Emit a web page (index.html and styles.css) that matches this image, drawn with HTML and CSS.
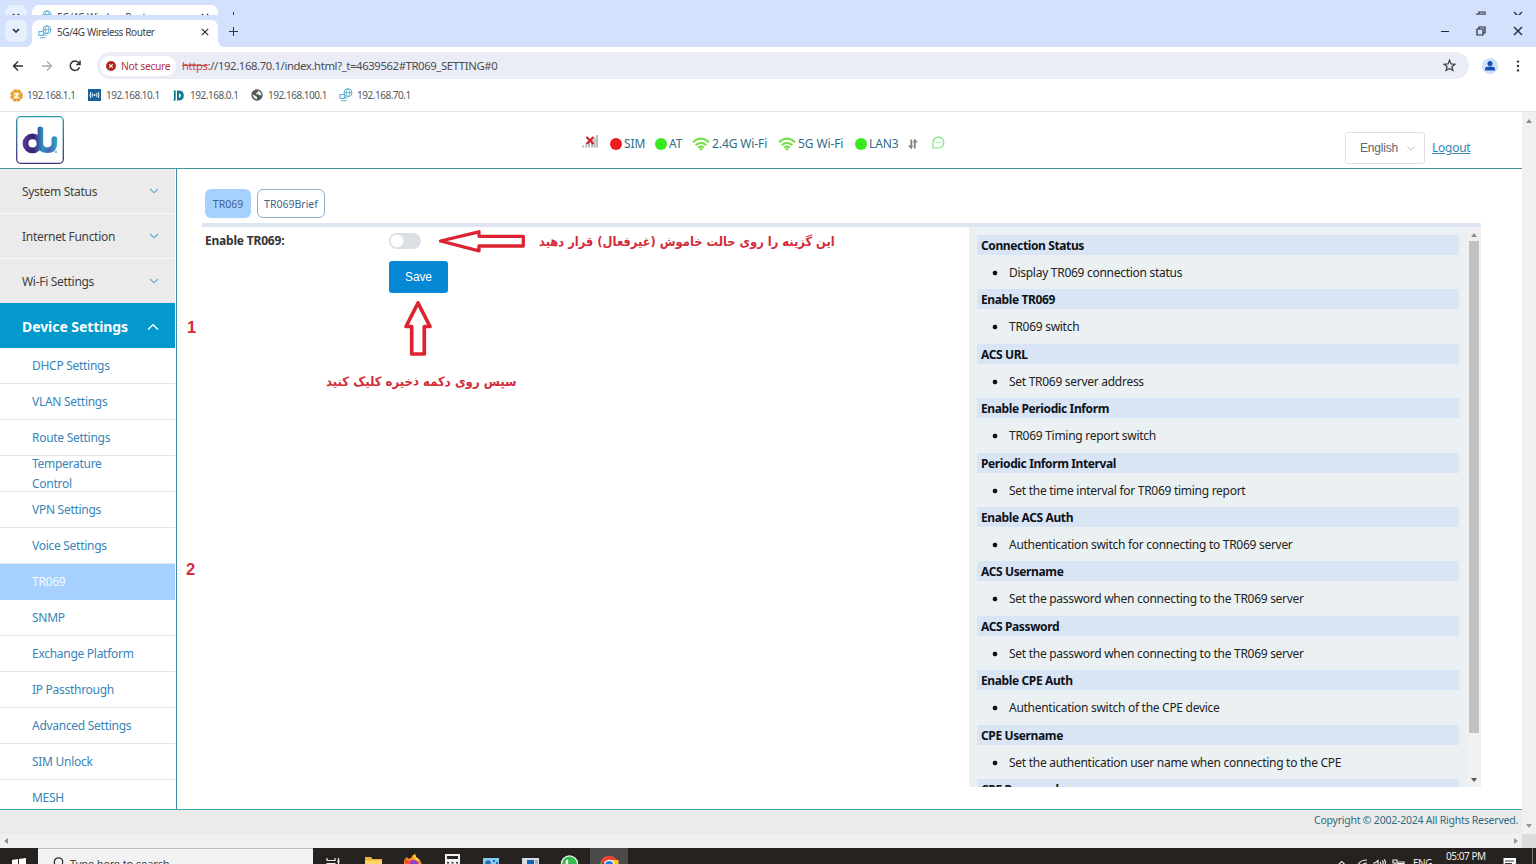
FILE: index.html
```html
<!DOCTYPE html>
<html lang="en">
<head>
<meta charset="utf-8">
<title>5G/4G Wireless Router</title>
<link rel="stylesheet" href="styles.css">
</head>
<body>
<svg class="defs" width="0" height="0">
  <symbol id="router" viewBox="0 0 14 14"><g fill="none" stroke="#63b2d3" stroke-width="1"><circle cx="9" cy="4.700" r="4"/><path d="M5 4.700h8M9 .7c-2.400 2.400-2.400 5.600 0 8M9 .7c2.400 2.400 2.400 5.600 0 8"/><path fill="#e5f5fb" d="M.8 6.500h4.700v4H.8zM2 12.700h5.500M5.500 9l3 1.500"/></g></symbol>
  <symbol id="down" viewBox="0 0 10 6"><path d="M1 1l4 3.700L9 1" fill="none" stroke="currentColor" stroke-width="1.100"/></symbol>
  <symbol id="wifi" viewBox="0 0 18 14"><g fill="none" stroke="#79df4b" stroke-width="2.100"><path d="M1 5.200q8-7 16 0M3.600 8.100q5.400-4.600 10.800 0M6 10.800q3-2.400 6 0"/></g><circle cx="9" cy="12.300" r="1.300" fill="#79df4b"/></symbol>
  <symbol id="cross" viewBox="0 0 10 10"><path d="M1 1l8 8M9 1l-8 8" fill="none" stroke="currentColor" stroke-width="1.400"/></symbol>
  <symbol id="restore" viewBox="0 0 10 10"><path d="M1 3h6v6H1zM3 3V1h6v6H7" fill="none" stroke="currentColor" stroke-width="1.200"/></symbol>
</svg>

<div class="ghost-strip">
  <div class="tab-search ghost-search"><svg width="8" height="6"><path d="M1 1l3 3 3-3" fill="none" stroke="#28304a" stroke-width="1.500"/></svg></div>
  <div class="tab ghost-tab"><svg width="14" height="14"><use href="#router"/></svg><span>5G/4G Wireless Router</span><svg class="tab-x" width="8" height="8"><use href="#cross"/></svg></div>
  <span class="plus"></span>
  <div class="win-buttons"><i class="none"></i><svg width="10" height="10"><use href="#restore"/></svg><svg width="10" height="10"><use href="#cross"/></svg></div>
</div>
<div class="tab-strip">
  <div class="tab-search"><svg width="8" height="6"><path d="M1 1l3 3 3-3" fill="none" stroke="#28304a" stroke-width="1.700"/></svg></div>
  <div class="tab front"><svg width="14" height="14"><use href="#router"/></svg><span>5G/4G Wireless Router</span><svg class="tab-x" width="8" height="8"><use href="#cross"/></svg></div>
  <span class="plus"></span>
  <div class="win-buttons"><i></i><svg width="10" height="10"><use href="#restore"/></svg><svg width="10" height="10"><use href="#cross"/></svg></div>
</div>

<div class="toolbar">
  <svg width="12" height="12" viewBox="0 0 12 12"><path d="M11 6H1.500M6 1.500L1.500 6 6 10.500" fill="none" stroke="#303238" stroke-width="1.500"/></svg>
  <svg width="12" height="12" viewBox="0 0 12 12"><path d="M1 6h9.500M6 1.500L10.500 6 6 10.500" fill="none" stroke="#a9abb0" stroke-width="1.300"/></svg>
  <svg class="reload" width="12" height="12" viewBox="0 0 12 12"><path d="M10.400 7.200A4.700 4.700 0 1 1 9.500 2.700L11 4.300M11 .6v4H7.200" fill="none" stroke="#303238" stroke-width="1.500"/></svg>
  <div class="address">
    <div class="chip"><svg width="10" height="10" viewBox="0 0 10 10"><circle cx="5" cy="5" r="5" fill="#b3261e"/><path d="M3.300 3.300l3.400 3.400M6.700 3.300L3.300 6.700" stroke="#fff" stroke-width="1.200"/></svg><span>Not secure</span></div>
    <span class="url"><s>https</s>://192.168.70.1/index.html?_t=4639562#TR069_SETTING#0</span>
    <svg class="star" width="13" height="13" viewBox="0 0 13 13"><path d="M6.500 1.300l1.500 3.600 3.900.3-3 2.500 1 3.800-3.400-2-3.400 2 1-3.800-3-2.500 3.900-.3z" fill="none" stroke="#42454c" stroke-width="1.300"/></svg>
  </div>
  <svg class="profile" width="16" height="16" viewBox="0 0 16 16"><circle cx="8" cy="8" r="8" fill="#d0e1fc"/><circle cx="8" cy="5.400" r="2.500" fill="#1652b5"/><path d="M3 12.500V11q0-2.400 5-2.400T13 11v1.500z" fill="#1652b5"/></svg>
  <svg class="dots" width="4" height="12"><g fill="#303238"><circle cx="2" cy="1.600" r="1.200"/><circle cx="2" cy="6" r="1.200"/><circle cx="2" cy="10.400" r="1.200"/></g></svg>
</div>
<div class="bookmarks">
  <a class="bm b1"><svg width="13" height="13" viewBox="0 0 13 13"><circle cx="6.500" cy="6.500" r="5" fill="#f3b340" stroke="#e79b28" stroke-width="2.600" stroke-dasharray="3.200 .8"/><path d="M4 4.700h4L4.800 8.500h4" stroke="#fff" stroke-width="1.500" fill="none"/></svg>192.168.1.1</a>
  <a class="bm b2"><svg width="13" height="12" viewBox="0 0 13 12"><path fill="#1a6099" d="M0 0h13v12H0z"/><path d="M3 3Q1 6 3 9M4.500 4.300q-1 1.700 0 3.400M10 3q2 3 0 6M8.500 4.300q1 1.700 0 3.400" fill="none" stroke="#fff"/><circle cx="6.500" cy="6" r="1" fill="#fff"/></svg>192.168.10.1</a>
  <a class="bm b3"><svg width="11" height="11" viewBox="0 0 11 11"><path fill="#0c7d91" d="M.3.500h2.400v10H0L1 9V2zM4 .500h1.500q5.300 0 5.300 5t-5.300 5H4z"/><path d="M6 3v5q1.800-.5 1.800-2.500T6 3z" fill="#fff"/></svg>192.168.0.1</a>
  <a class="bm b4"><svg width="12" height="12" viewBox="0 0 12 12"><circle cx="6" cy="6" r="5.700" fill="#55585c"/><path d="M7 1.700q3.500 1.300 3.500 4l-1.800.8L7.300 5.200H5.500L5 4l1.800-.8zM1.600 5.500l2.700 1.200L6 8v2.300Q2 9.500 1.600 5.500z" fill="#f2f3f4"/></svg>192.168.100.1</a>
  <a class="bm b5"><svg width="14" height="14"><use href="#router"/></svg>192.168.70.1</a>
</div>

<div class="viewport">
  <div class="page">
    <header class="header">
      <svg class="logo" width="48" height="48" viewBox="0 0 48 48"><defs><linearGradient id="lg" x1="6" y1="0" x2="42" y2="0" gradientUnits="userSpaceOnUse"><stop offset="0" stop-color="#5a3aa0"/><stop offset=".3" stop-color="#35236f"/><stop offset=".45" stop-color="#3f559f"/><stop offset=".58" stop-color="#2796bd"/><stop offset=".75" stop-color="#4a62b0"/><stop offset="1" stop-color="#27b3c5"/></linearGradient><linearGradient id="lb" x1="0" y1="0" x2="0" y2="1"><stop offset="0" stop-color="#299ba5"/><stop offset="1" stop-color="#432d7c"/></linearGradient></defs><rect x=".7" y=".7" width="46.600" height="46.600" rx="4" fill="#fff" stroke="url(#lb)" stroke-width="1.300"/><circle cx="16.500" cy="27.400" r="7" fill="none" stroke="url(#lg)" stroke-width="5.800"/><path d="M24.400 13.300V27q0 7.200 7 7.200T38.400 27v-4" fill="none" stroke="url(#lg)" stroke-width="5.600" stroke-linecap="round"/><circle cx="39.900" cy="36" r="1.100" fill="#5db7b3"/></svg>
      <div class="status">
        <svg class="sig" width="16" height="13" viewBox="0 0 16 13"><path d="M1 10.500v2M4 9.500v3M7 7.500v5M10 5v7.500M12.500 3v9.500M15 0v12.500" stroke="#b9b9b9" stroke-width="2"/><path d="M4.500 2l7 7M11.500 2l-7 7" stroke="#d3212b" stroke-width="2.200"/></svg>
        <span class="st sim"><i class="dot red"></i>SIM</span>
        <span class="st at"><i class="dot"></i>AT</span>
        <span class="st w24"><svg width="18" height="14"><use href="#wifi"/></svg>2.4G Wi-Fi</span>
        <span class="st w5"><svg width="18" height="14"><use href="#wifi"/></svg>5G Wi-Fi</span>
        <span class="st lan"><i class="dot"></i>LAN3</span>
        <svg class="updown" width="10" height="12" viewBox="0 0 10 12"><path d="M3.300 1.500v7.700M6.700 10.500V3" stroke="#858585" stroke-width="1.900" fill="none"/><path d="M0 7.500h5l-1.700 4zM5 4.500h5L6.700.5z" fill="#858585"/></svg>
        <svg class="chat" width="13" height="13" viewBox="0 0 13 13"><path d="M1 12V6.200A5.400 5.400 0 1 1 6.500 12z" fill="none" stroke="#7ae27c" stroke-width="1.200"/><path d="M3.700 6.500h1.200M5.900 6.500h1.200M8.100 6.500h1.200" stroke="#7ae27c" stroke-width="1.200"/></svg>
      </div>
      <div class="select"><span>English</span><svg width="8" height="5" viewBox="0 0 10 6"><path d="M.5.500L5 5 9.500.5" fill="none" stroke="#b4b8c0" stroke-width="1.200"/></svg></div>
      <a class="logout">Logout</a>
    </header>
    <div class="main">
      <nav class="sidebar">
        <div class="group"><span>System Status</span><svg width="10" height="6"><use href="#down"/></svg></div>
        <div class="group"><span>Internet Function</span><svg width="10" height="6"><use href="#down"/></svg></div>
        <div class="group"><span>Wi-Fi Settings</span><svg width="10" height="6"><use href="#down"/></svg></div>
        <div class="group open"><span>Device Settings</span><svg width="12" height="8" viewBox="0 0 12 8"><path d="M1 6.500L6 1.700l5 4.800" fill="none" stroke="#fff" stroke-width="1.400"/></svg></div>
        <a class="item">DHCP Settings</a>
        <a class="item">VLAN Settings</a>
        <a class="item">Route Settings</a>
        <a class="item">Temperature<br>Control</a>
        <a class="item">VPN Settings</a>
        <a class="item">Voice Settings</a>
        <a class="item active">TR069</a>
        <a class="item">SNMP</a>
        <a class="item">Exchange Platform</a>
        <a class="item">IP Passthrough</a>
        <a class="item">Advanced Settings</a>
        <a class="item">SIM Unlock</a>
        <a class="item">MESH</a>
      </nav>
      <section class="content">
        <div class="tabs"><a class="pill on">TR069</a><a class="pill brief">TR069Brief</a></div>
        <div class="panel">
          <div class="form">
            <div class="row"><label>Enable TR069:</label><i class="switch"></i></div>
            <div class="save">Save</div>
          </div>
          <aside class="help">
            <div class="topics">
              <h4>Connection Status</h4><p>Display TR069 connection status</p>
              <h4>Enable TR069</h4><p>TR069 switch</p>
              <h4>ACS URL</h4><p>Set TR069 server address</p>
              <h4>Enable Periodic Inform</h4><p>TR069 Timing report switch</p>
              <h4>Periodic Inform Interval</h4><p>Set the time interval for TR069 timing report</p>
              <h4>Enable ACS Auth</h4><p>Authentication switch for connecting to TR069 server</p>
              <h4>ACS Username</h4><p>Set the password when connecting to the TR069 server</p>
              <h4>ACS Password</h4><p>Set the password when connecting to the TR069 server</p>
              <h4>Enable CPE Auth</h4><p>Authentication switch of the CPE device</p>
              <h4>CPE Username</h4><p>Set the authentication user name when connecting to the CPE</p>
              <h4>CPE Password</h4>
            </div>
            <div class="scroll"><i class="tri up"></i><div class="thumb"></div><i class="tri dn"></i></div>
          </aside>
        </div>
      </section>
    </div>
    <footer class="footer">Copyright © 2002-2024 All Rights Reserved.</footer>
  </div>
  <div class="vscroll"><i class="tri up"></i><i class="tri dn"></i></div>
</div>
<div class="hscroll"><i class="tri lf"></i><i class="tri rt"></i><i class="corner"></i></div>

<div class="taskbar">
  <svg class="start" width="14" height="14" viewBox="0 0 14 14"><path d="M0 2l6-.9v5.600H0zM7 1l7-1v6.700H7zM0 7.500h6v5.600L0 12.300zM7 7.500h7V14l-7-1z" fill="#fff"/></svg>
  <div class="search"><svg width="12" height="14" viewBox="0 0 12 14"><circle cx="6.500" cy="5" r="4.200" fill="none" stroke="#333" stroke-width="1.300"/><path d="M4 8.500L.8 12.500" stroke="#333" stroke-width="1.300"/></svg><span>Type here to search</span></div>
  <svg class="apps" width="337" height="17" viewBox="313 847 337 17">
    <path d="M590 847h38v17h-38z" fill="#4b4a49"/>
    <path d="M327 857v2.500h8V857M327 864v-1.500h8v1.500M338.500 857v7" stroke="#eee" stroke-width="1.200" fill="none"/><path d="M337.500 859.500h2v2h-2z" fill="#fff"/>
    <path d="M365 856h6l1.500 2H382v6h-17z" fill="#e9b23c"/><path d="M365 859.500h17v5h-17z" fill="#ffd567"/>
    <path d="M404 864q-.5-6 3-8l1 2 3-1q1-3 4-4l1 3q5 3 6 8z" fill="#ff9029"/><path d="M413 855l2-2 1 3 4 3-3 1z" fill="#ffd335"/><path d="M407 864q1-5 6-5t6 5z" fill="#8b41cf"/><path d="M405 858l4 2 2-1-1 5h-5z" fill="#f9453c"/>
    <path d="M445 853h15v11h-15z" fill="#f2f2f2"/><path d="M447 855h11v3h-11z" fill="#252525"/><path d="M447 861h2v1.500h-2zM451.500 861h2v1.500h-2zM456 861h2v1.500h-2z" fill="#333"/>
    <path d="M483 857h16v7h-16z" fill="#83cdf0"/><circle cx="488" cy="862" r="2.700" fill="#286bbb"/><path d="M493 859h2v2h-2zM496 861h2v3h-2z" fill="#246caf"/>
    <path d="M522 857h17v7h-17z" fill="#d6dce3"/><path d="M527 859h7v5h-7z" fill="#1163b7"/><path d="M535 860h3M535 862h3" stroke="#888"/>
    <circle cx="569.500" cy="863" r="8.700" fill="#eff8ef"/><circle cx="569.500" cy="863" r="7.500" fill="#34bd4d"/><path d="M566 859l1.500-.5 1 2.300-1 1.200 3 3-5-1z" fill="#fff"/>
    <path d="M600 862a9.500 9.500 0 0 1 18.500 0z" fill="#e94435"/><path d="M600 861l5 3h-5z" fill="#29a34b"/><path d="M610 859h8.500v5H610z" fill="#fac52d"/><circle cx="609.200" cy="864" r="5.200" fill="#fff"/><circle cx="609.200" cy="864" r="4" fill="#2e75e6"/>
  </svg>
  <svg class="tray" width="68" height="17" viewBox="1337 847 68 17"><g fill="none" stroke="#e8e8e8" stroke-width="1.200"><path d="M1338 864l3.700-3.500 3.700 3.500M1358 864q2-5 9-5M1361 865q2-3 6-3M1373 862h2l3-2.500v5M1380 861q1.500 1.500 0 3M1382 859.500q2.500 2 0 5M1384 858.500q3 3 0 6M1398 861h7v4M1393 859h4v3h-4zM1395 862v3"/></g><path d="M1397 862h7v2h-7z" fill="#eee"/></svg>
  <span class="lang">ENG</span><span class="clock">05:07 PM</span>
  <svg class="notes" width="33" height="17" viewBox="1503 847 33 17"><path d="M1503.500 857H1516v7h-12.500z" fill="#fff"/><path d="M1505 860h9M1505 862.500h7" stroke="#333"/><path d="M1514 864a3.500 3.500 0 0 1 6 0z" fill="#4b4a48"/><path d="M1532.500 847v17" stroke="#77736e"/></svg>
</div>

<svg class="arrow left" width="90" height="26" viewBox="0 0 90 26"><path d="M4.500 13L43 3.800V8.300H87.300V18H43V22.800z" fill="#fff" stroke="#dc2430" stroke-width="3.300" stroke-linejoin="round"/></svg>
<svg class="arrow upw" width="32" height="60" viewBox="0 0 32 60"><path d="M16 4L28 27.500h-5.700V55H9.700V27.500H4z" fill="#fff" stroke="#dc2430" stroke-width="3.700" stroke-linejoin="round"/></svg>
<div class="note n1" lang="fa" dir="rtl">این گزینه را روی حالت خاموش (غیرفعال) قرار دهید</div>
<div class="note n2" lang="fa" dir="rtl">سپس روی دکمه ذخیره کلیک کنید</div>
<div class="mark m1">1</div>
<div class="mark m2">2</div>
</body>
</html>
```
FILE: styles.css
```css
* { box-sizing: border-box; }
html, body { margin: 0; height: 864px; overflow: hidden; }
body { width: 1536px; position: relative; display: flex; flex-direction: column; background: #fff; font-family: "Noto Sans", sans-serif; font-size: 12px; color: #333; white-space: nowrap; }
svg { display: block; flex: none; }
.defs { display: none; }

/* browser chrome */
.ghost-strip { height: 15px; padding: 5px 0 0 5px; background: #d3e1fc; display: flex; overflow: hidden; flex: none; color: #303440; }
.tab-strip { height: 32px; padding: 5px 0 0 5px; background: #d3e1fc; display: flex; flex: none; color: #252a35; }
.tab-search { width: 22px; height: 22px; border-radius: 7px; background: #e9f0fd; display: flex; align-items: center; justify-content: center; margin-right: 5px; flex: none; }
.tab { width: 186px; height: 27px; border-radius: 7px 7px 0 0; background: #fff; padding: 0 9px 4px 6px; display: flex; align-items: center; font-size: 10px; flex: none; color: #444; }
.tab span { margin-left: 5px; letter-spacing: -.4px; flex: 1; }
.front { position: relative; }
.front::before, .front::after { content: ""; position: absolute; bottom: 0; width: 6px; height: 6px; }
.front::before { left: -6px; background: radial-gradient(circle at 0 0, transparent 5.600px, #fff 6px); }
.front::after { right: -6px; background: radial-gradient(circle at 100% 0, transparent 5.600px, #fff 6px); }
.ghost-tab { border-radius: 7px; height: 27px; }
.tab-x { color: #25272c; }
.plus { width: 9px; height: 9px; margin: 7px 0 0 11px; flex: none; background: linear-gradient(#30343d,#30343d) center/9px 1px no-repeat, linear-gradient(#30343d,#30343d) center/1px 9px no-repeat; }
.win-buttons { margin-left: auto; display: flex; gap: 27px; padding: 6px 13px 0 0; }
.win-buttons i { width: 8px; height: 1px; background: #252a35; margin: 5px 0 0; }
.win-buttons i.none { background: none; }
.toolbar { height: 37px; background: #fff; display: flex; align-items: center; padding: 0 15px 0 12px; gap: 17px; flex: none; border-radius: 6px 6px 0 0; }
body > .toolbar { background: linear-gradient(#fff, #fff); }
.reload { margin-left: -1px; }
.address { width: 1372px; height: 27px; margin-left: -1px; border-radius: 14px; background: #ebedf6; display: flex; align-items: center; padding: 0 13px 0 3px; }
.chip { width: 76px; height: 20px; border-radius: 10px; background: #fff; display: flex; align-items: center; padding-left: 6px; gap: 5px; color: #b3323b; font-size: 10.300px; letter-spacing: -.3px; }
.url { margin-left: 6px; font-size: 11.300px; letter-spacing: -.38px; color: #4a4c52; }
.url s { color: #c44a4a; }
.star { margin-left: auto; }
.profile { margin-left: -4px; }
.dots { margin-left: 1px; }
.bookmarks { height: 28px; display: flex; align-items: center; padding: 0 0 5px 10px; border-bottom: 1px solid #e2e2e2; flex: none; font-size: 10px; letter-spacing: -.48px; color: #55585d; }
.bm { display: flex; align-items: center; gap: 5px; width: 78px; }
.b1 { gap: 4px; } .b2 { width: 85px; } .b3 { width: 78px; gap: 6px; } .b4 { width: 88px; } .b5 { gap: 4px; }

/* page frame */
.viewport { height: 722px; display: flex; flex: none; }
.page { width: 1522px; display: flex; flex-direction: column; }
.header { height: 57px; border-bottom: 1px solid #3f969f; display: flex; padding-left: 16px; flex: none; }
.logo { margin-top: 4px; }
.status { margin: 22px 0 0 518px; width: 364px; height: 19px; display: flex; align-items: center; font-size: 12px; letter-spacing: -.1px; color: #306d85; }
.st { display: flex; align-items: center; }
.sig { margin: -4px 12px 0 0; }
.dot { width: 12px; height: 12px; border-radius: 50%; background: #37e91d; margin-right: 2px; flex: none; }
.dot.red { background: #ee1b22; }
.sim { width: 45px; } .at { width: 37px; } .w24 { width: 86px; } .w5 { width: 77px; } .lan { width: 53px; }
.w24 svg, .w5 svg { margin-right: 2px; }
.chat { margin: -2px 0 0 14px; }
.select { margin: 20px 0 0 399px; width: 80px; height: 32px; border: 1px solid #dddfe3; border-radius: 3px; display: flex; align-items: center; justify-content: space-between; padding: 0 9px 0 14px; font: 12px "Liberation Sans", sans-serif; color: #62666c; letter-spacing: -.2px; }
.logout { margin: 27px 0 0 7px; color: #3586b8; text-decoration: underline; line-height: 17px; font-size: 12px; letter-spacing: -.25px; }
.main { height: 641px; display: flex; border-bottom: 1px solid #3aa9b3; }
.sidebar { width: 177px; border-right: 1px solid #3f8ba5; overflow: hidden; flex: none; padding-right: 1px; }
.group { height: 45px; background: #ebebeb; border-bottom: 1px solid #fafafa; display: flex; align-items: center; justify-content: space-between; padding: 0 16px 0 22px; font-size: 12px; letter-spacing: -.3px; color: #414141; }
.group svg { color: #67abd2; }
.group.open { margin-top: -1px; padding-top: 2px; background: #0399cc; color: #fff; font-weight: 700; font-size: 14px; letter-spacing: -.07px; border: 0; }
.item { height: 36px; border-bottom: 1px solid #dce6f0; padding-left: 32px; display: flex; align-items: center; line-height: 20px; font-size: 12px; letter-spacing: -.28px; color: #3884b7; }
.item.active { background: #a6d1ff; color: #f4f9ff; border-color: #a6d1ff; }
.content { padding: 20px 0 0 28px; display: flex; flex-direction: column; }
.tabs { height: 34px; display: flex; gap: 6px; }
.pill { width: 46px; height: 29px; border-radius: 6px; display: flex; align-items: center; justify-content: center; font-size: 10.500px; color: #41658d; }
.pill.on { background: #a6d0fd; }
.brief { width: 68px; border: 1px solid #93aecb; }
.panel { width: 1279px; margin-left: -3px; border-top: 4px solid #dde5f2; display: flex; }
.form { width: 767px; padding: 5px 0 0 3px; }
.row { display: flex; height: 17px; align-items: center; }
.row label { width: 184px; font-size: 12px; font-weight: 700; letter-spacing: -.2px; color: #333; }
.switch { width: 32px; height: 16px; border-radius: 8px; background: radial-gradient(circle at 8px 8px, #fff 6px, transparent 6.700px), #dcdfe6; }
.save { margin: 12px 0 0 184px; width: 59px; height: 32px; border-radius: 3px; background: #0688d4; color: #fff; display: flex; align-items: center; justify-content: center; font: 12px "Liberation Sans", sans-serif; letter-spacing: -.15px; }
.help { width: 512px; height: 560px; background: #ebf1f3; display: flex; overflow: hidden; color: #222; }
.topics { width: 499px; padding: 8px 9px 0 8px; }
.topics h4 { margin: 0; height: 20px; line-height: 21px; padding-left: 4px; background: #d9e4f4; font-size: 12px; letter-spacing: -.38px; color: #0c1219; }
.topics p { margin: 0; height: 34.400px; line-height: 36px; padding-left: 32px; font-size: 12px; letter-spacing: -.28px; background: radial-gradient(circle at 18px 18px, #111 2px, transparent 2.700px); }
.scroll { width: 13px; background: #f1f1f1; display: flex; flex-direction: column; align-items: center; padding: 6px 2px 5px 1px; }
.thumb { width: 10px; height: 492px; margin-top: 4px; background: #c1c1c1; }
.tri { width: 0; height: 0; border: 3px solid transparent; flex: none; }
.tri.up { border-bottom: 4px solid #8c8c8c; border-top: 0; }
.tri.dn { border-top: 4px solid #555; border-bottom: 0; margin-top: auto; }
.footer { height: 24px; background: #ebebeb; text-align: right; padding-right: 4px; line-height: 21px; font-size: 10.500px; letter-spacing: -.23px; color: #2d6c81; }
.vscroll { width: 14px; background: #f0f0f0; display: flex; flex-direction: column; align-items: center; padding: 7px 0 6px; }
.vscroll .dn { border-top-color: #999; }
.hscroll { height: 14px; background: #f0f0f0; display: flex; align-items: center; padding-left: 4px; flex: none; }
.tri.lf { border-right: 4px solid #8e8e8e; border-left: 0; }
.tri.rt { border-left: 4px solid #999; border-right: 0; margin-left: auto; margin-right: 4px; }
.corner { width: 14px; height: 14px; background: #dcdcdc; }

/* desktop taskbar */
.taskbar { height: 17px; background: #25221f; display: flex; overflow: hidden; flex: none; color: #eee; }
.start { margin: 10px 0 0 12px; }
.search { margin-left: 12px; width: 275px; height: 17px; background: #f2f2f2; border-top: 1px solid #bbb; padding: 8px 0 0 14px; display: flex; gap: 6px; color: #444; font-size: 11px; line-height: 13px; letter-spacing: -.1px; }
.tray { margin-left: 687px; }
.lang { margin: 7px 0 0 8px; width: 20px; font-size: 10px; line-height: 16px; letter-spacing: -.5px; }
.clock { margin-left: 13px; width: 45px; font-size: 10px; line-height: 17px; letter-spacing: -.45px; }
.notes { margin-left: auto; }

/* callouts drawn over the page */
.arrow, .note, .mark { position: absolute; }
.left { left: 436px; top: 228px; }
.upw { left: 402px; top: 299px; }
.note { color: #d42c38; font: bold 13px "DejaVu Sans", sans-serif; line-height: 20px; transform-origin: left center; }
.n1 { left: 539px; top: 232px; transform: scaleX(.883); }
.n2 { left: 326px; top: 372px; transform: scaleX(.9); }
.mark { color: #d42c38; font: bold 16.500px/18px "Liberation Sans", sans-serif; }
.m1 { left: 187px; top: 318px; }
.m2 { left: 186px; top: 560px; }
```
